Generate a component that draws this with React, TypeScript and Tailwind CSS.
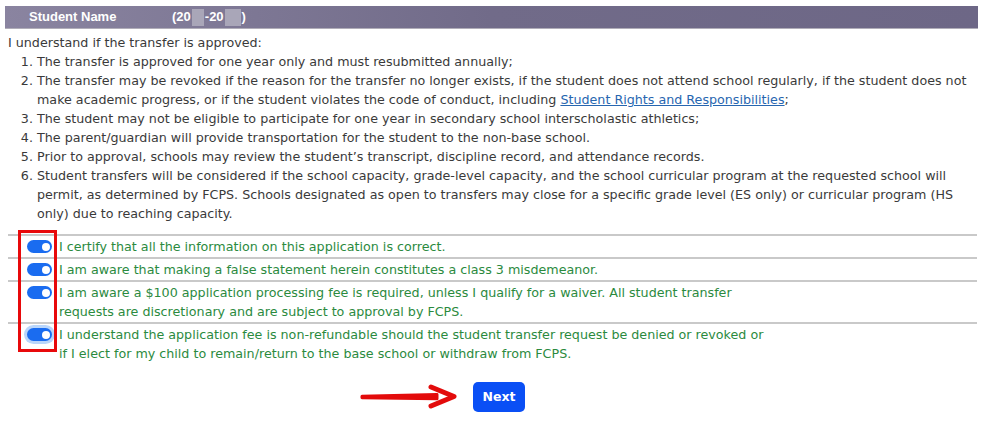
import React from "react";

function Toggle({ focus }: { focus?: boolean }) {
  return (
    <span
      className={
        "relative inline-flex items-center justify-end w-[25px] h-[13px] rounded-full bg-[#1a6cf0] pr-[2px] shrink-0 " +
        (focus ? "shadow-[0_0_0_3px_#b9d6fb]" : "")
      }
    >
      <span className="w-[8px] h-[8px] rounded-full bg-white" />
    </span>
  );
}

function Row({ children, focus, last }: { children: React.ReactNode; focus?: boolean; last?: boolean }) {
  return (
    <div className={"flex items-start border-t-2 border-[#c9c9c9] pl-[19px] pt-[1px] " + (last ? "pb-0" : "pb-[1px]")}>
      <div className="w-[32px] h-[19px] flex items-center shrink-0">
        <Toggle focus={focus} />
      </div>
      <div className="text-[#2b8a3e] leading-[19px]">{children}</div>
    </div>
  );
}

export default function App() {
  return (
    <div
      className="relative w-[981px] h-[424px] bg-white text-[#3a3a3a] text-[12.7px] overflow-hidden"
      style={{ fontFamily: "'DejaVu Sans', Verdana, sans-serif" }}
    >
      <div className="pt-[6px] pl-[5px] pr-[3px]">
        <div
          className="h-[23px] flex items-center bg-gradient-to-r from-[#8a84a0] via-[#716b89] to-[#6d6786] border-b border-[#b0adb8] text-white font-bold text-[13px]"
          style={{ fontFamily: "'Liberation Sans', Arial, sans-serif" }}
        >
          <span className="ml-[24px] w-[143px]">Student Name</span>
          <span className="flex items-center font-bold">
            (20
            <span className="inline-block w-[12px] h-[17px] bg-[#a9a6b8] mx-[1px]" />
            -20
            <span className="inline-block w-[16px] h-[17px] bg-[#a9a6b8] mx-[1px]" />)
          </span>
        </div>
      </div>

      <p className="pl-[8px] mt-[4px] leading-[19px]">I understand if the transfer is approved:</p>
      <ol className="list-decimal pl-[37px] pr-[8px] leading-[19px]">
        <li>The transfer is approved for one year only and must resubmitted annually;</li>
        <li>
          The transfer may be revoked if the reason for the transfer no longer exists, if the student does not attend school regularly, if the student does not make academic progress, or if the student violates the code of conduct, including{" "}
          <a className="text-[#2766b0] underline">Student Rights and Responsibilities</a>;
        </li>
        <li>The student may not be eligible to participate for one year in secondary school interscholastic athletics;</li>
        <li>The parent/guardian will provide transportation for the student to the non-base school.</li>
        <li>Prior to approval, schools may review the student’s transcript, discipline record, and attendance records.</li>
        <li>
          Student transfers will be considered if the school capacity, grade-level capacity, and the school curricular program at the requested school will permit, as determined by FCPS. Schools designated as open to transfers may close for a specific grade level (ES only) or curricular program (HS only) due to reaching capacity.
        </li>
      </ol>

      <div className="ml-[8px] mr-[4px] mt-[11px]">
        <Row>I certify that all the information on this application is correct.</Row>
        <Row>I am aware that making a false statement herein constitutes a class 3 misdemeanor.</Row>
        <Row>
          I am aware a $100 application processing fee is required, unless I qualify for a waiver. All student transfer
          <br />
          requests are discretionary and are subject to approval by FCPS.
        </Row>
        <Row focus last>
          I understand the application fee is non-refundable should the student transfer request be denied or revoked or
          <br />
          if I elect for my child to remain/return to the base school or withdraw from FCPS.
        </Row>
      </div>

      <div className="absolute left-[18px] top-[230px] w-[39px] h-[122px] border-[3px] border-[#e8090b] pointer-events-none" />

      <div className="flex items-center mt-[19px] pl-[359px]">
        <svg width="98" height="26" viewBox="0 0 98 26" className="shrink-0">
          <path d="M3 12.2 L78 10.5 L78 14.8 L3 13.8 Z" fill="#e30b0b" stroke="#e30b0b" strokeWidth="3" strokeLinejoin="round" />
          <path d="M72 3 L95 12.5 L72 22" fill="none" stroke="#e30b0b" strokeWidth="5" strokeLinecap="round" strokeLinejoin="round" />
        </svg>
        <button className="ml-[16px] w-[52px] h-[30px] rounded-[5px] bg-[#0a4ff5] text-white font-bold text-[12.5px] flex items-center justify-center">
          Next
        </button>
      </div>
    </div>
  );
}
